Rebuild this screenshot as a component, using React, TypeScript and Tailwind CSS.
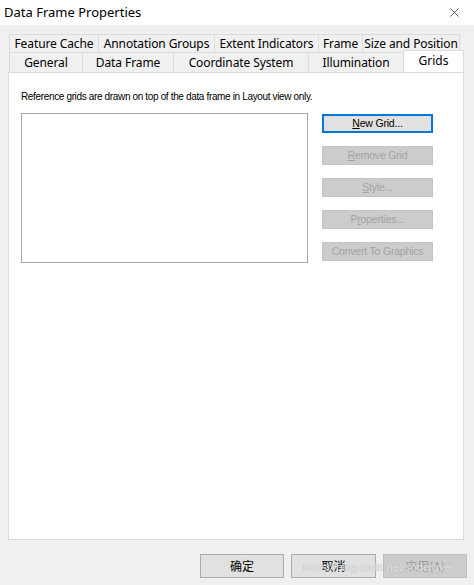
import { X } from "lucide-react";

const row1 = [
  { label: "Feature Cache", w: "w-[89px]" },
  { label: "Annotation Groups", w: "w-[116px]" },
  { label: "Extent Indicators", w: "w-[104px]" },
  { label: "Frame", w: "w-[44px]" },
  { label: "Size and Position", w: "w-[98px]" },
];

const row2 = [
  { label: "General", w: "w-[73px]" },
  { label: "Data Frame", w: "w-[91px]" },
  { label: "Coordinate System", w: "w-[135px]" },
  { label: "Illumination", w: "w-[95px]" },
];

const sideButtons = [
  { pre: "", key: "R", post: "emove Grid" },
  { pre: "", key: "S", post: "tyle..." },
  { pre: "P", key: "r", post: "operties..." },
  { pre: "Convert To Graphics", key: "", post: "" },
];

const App = () => {
  return (
    <div className="relative w-[474px] h-[585px] bg-[#f0f0f0] flex flex-col overflow-hidden font-['Noto_Sans',sans-serif] text-black">
      {/* Title bar */}
      <div className="h-[25px] bg-white flex items-center justify-between pl-[4px] pr-[12px] shrink-0">
        <span className="text-[13px] leading-none">Data Frame Properties</span>
        <X className="w-[15px] h-[15px] text-[#333]" strokeWidth={1.2} />
      </div>

      {/* Tabs */}
      <div className="mt-[9px] pl-[9px] flex flex-col">
        <div className="flex h-[18px]">
          {row1.map(t => (
            <div
              key={t.label}
              className={`${t.w} h-full border border-b-0 border-r-0 last:border-r border-[#dcdcdc] flex items-center justify-center whitespace-nowrap text-[12px] tracking-[-0.1px] leading-none`}
            >
              {t.label}
            </div>
          ))}
        </div>
        <div className="flex h-[20px]">
          {row2.map(t => (
            <div
              key={t.label}
              className={`${t.w} h-full border border-r-0 border-b-0 border-[#dcdcdc] flex items-center justify-center whitespace-nowrap text-[12px] tracking-[-0.1px] leading-none`}
            >
              {t.label}
            </div>
          ))}
          <div className="relative w-[61px] h-[22px] -mt-[2px] bg-white border border-b-0 border-[#dcdcdc] z-10 flex items-center justify-center text-[12px] leading-none pb-[2px]">
            Grids
          </div>
        </div>
      </div>

      {/* Panel */}
      <div className="ml-[8px] w-[456px] h-[468px] bg-white border border-[#dcdcdc] pt-[17px] pl-[12px] flex flex-col font-['Liberation_Sans',Arial,sans-serif]">
        <p className="text-[10px] tracking-[-0.35px] leading-[13px] text-black whitespace-nowrap">
          Reference grids are drawn on top of the data frame in Layout view only.
        </p>
        <div className="mt-[10px] flex">
          <div className="w-[287px] h-[150px] border border-[#a8a8a8] bg-white" />
          <div className="ml-[14px] mt-[1px] flex flex-col gap-[13px]">
            <button className="w-[111px] h-[19px] bg-[#e1e1e1] border-2 border-[#0078d7] text-[10.5px] tracking-[-0.2px] leading-none text-black flex items-center justify-center">
              <span className="underline">N</span>ew Grid...
            </button>
            {sideButtons.map(b => (
              <button
                key={b.pre + b.key + b.post}
                className="w-[111px] h-[19px] bg-[#cccccc] border border-[#c4c4c4] text-[10.5px] tracking-[-0.2px] leading-none text-[#a3a3a3] flex items-center justify-center"
              >
                {b.pre}
                {b.key && <span className="underline">{b.key}</span>}
                {b.post}
              </button>
            ))}
          </div>
        </div>
      </div>

      {/* Bottom buttons */}
      <div className="flex justify-end gap-[7px] pr-[7px] mt-[14px] font-['Noto_Sans_CJK_SC',sans-serif]">
        <button className="w-[84px] h-[24px] bg-[#e1e1e1] border border-[#adadad] text-[12px] leading-none">确定</button>
        <button className="w-[85px] h-[24px] bg-[#e1e1e1] border border-[#adadad] text-[12px] leading-none">取消</button>
        <button className="w-[84px] h-[24px] bg-[#cccccc] border border-[#bfbfbf] text-[12px] leading-none text-[#9a9a9a]">应用(A)</button>
      </div>

      {/* Watermark */}
      <span className="absolute left-[303px] top-[559px] text-[11.5px] tracking-[-0.2px] whitespace-nowrap font-['Liberation_Sans',Arial,sans-serif] text-white/70 [text-shadow:0_0_1px_#9a9a9a] pointer-events-none">
        https://blog.csdn.net/soderayer
      </span>
    </div>
  );
};

export default App;
